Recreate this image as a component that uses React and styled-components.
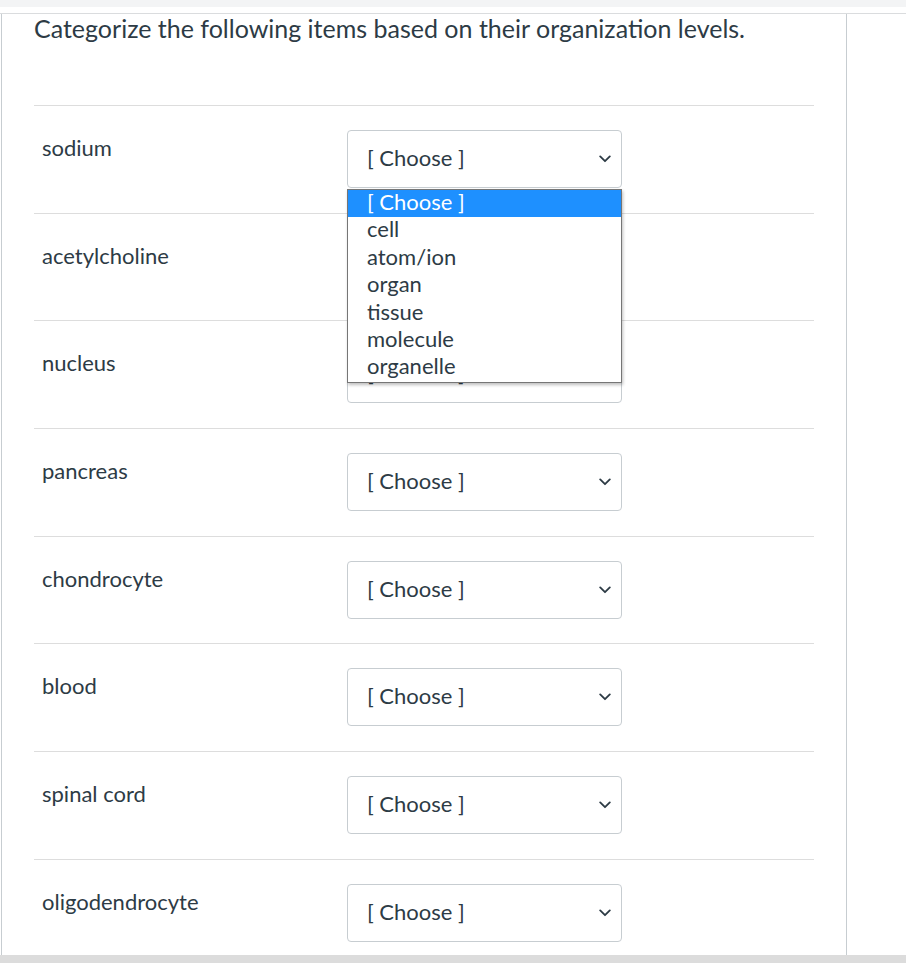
import React from 'react';
import styled, { createGlobalStyle } from 'styled-components';

const items = [
  'sodium',
  'acetylcholine',
  'nucleus',
  'pancreas',
  'chondrocyte',
  'blood',
  'spinal cord',
  'oligodendrocyte',
];

const options = ['[ Choose ]', 'cell', 'atom/ion', 'organ', 'tissue', 'molecule', 'organelle'];

const Chevron = () => (
  <svg width="12" height="8" viewBox="0 0 12 8" fill="none">
    <path d="M1.2 1.4 L6 6.2 L10.8 1.4" stroke="#2d3b45" strokeWidth="1.8" strokeLinecap="round" strokeLinejoin="round" />
  </svg>
);

const App = () => {
  return (
    <Page>
      <GlobalStyle />
      <TopBand />
      <Main>
        <QuestionBox>
          <Title>Categorize the following items based on their organization levels.</Title>
          <Rows>
            {items.map((item, i) => (
              <Row key={item}>
                <Label>{item}</Label>
                <SelectWrap>
                  <SelectBox>
                    <SelectText>[ Choose ]</SelectText>
                    <Chevron />
                  </SelectBox>
                  {i === 0 && (
                    <OptionList>
                      {options.map((opt, j) => (
                        <Option key={opt} $active={j === 0}>{opt}</Option>
                      ))}
                    </OptionList>
                  )}
                </SelectWrap>
              </Row>
            ))}
          </Rows>
        </QuestionBox>
      </Main>
      <BottomBand />
    </Page>
  );
};

export default App;

const GlobalStyle = createGlobalStyle`
  body {
    margin: 0;
    background: #fff;
    font-family: Lato, "Open Sans", sans-serif;
    color: #2d3b45;
  }
`;

const Page = styled.div`
  height: 963px;
  display: flex;
  flex-direction: column;
  overflow: hidden;
`;

const TopBand = styled.div`
  height: 7px;
  background: #f3f4f5;
  margin-bottom: 6px;
  flex-shrink: 0;
`;

const BottomBand = styled.div`
  height: 8px;
  background: #dcdcdc;
  flex-shrink: 0;
`;

const Main = styled.div`
  flex: 1;
  min-height: 0;
  border-top: 1px solid #dadcde;
  display: flex;
  overflow: hidden;
`;

const QuestionBox = styled.div`
  width: 812px;
  margin-left: 1px;
  border-left: 1px solid #c7cdd1;
  border-right: 1px solid #c7cdd1;
  padding-left: 32px;
  box-sizing: content-box;
  flex-shrink: 0;
`;

const Title = styled.div`
  font-size: 25px;
  line-height: 28px;
  padding-top: 0;
  height: 91px;
`;

const Rows = styled.div`
  width: 780px;
`;

const Row = styled.div`
  display: flex;
  border-top: 1px solid #dddddd;
  padding: 24px 0 24.7px;
`;

const Label = styled.div`
  width: 313px;
  padding-left: 8px;
  box-sizing: border-box;
  font-size: 22px;
  line-height: 26px;
  padding-top: 5px;
`;

const SelectWrap = styled.div`
  position: relative;
`;

const SelectBox = styled.div`
  width: 275px;
  height: 58px;
  box-sizing: border-box;
  border: 1px solid #c7cdd1;
  border-radius: 4px;
  background: #fff;
  display: flex;
  align-items: center;
  justify-content: space-between;
  padding: 0 10px 0 19px;
`;

const SelectText = styled.span`
  font-size: 22px;
  line-height: 26px;
  margin-bottom: 2px;
`;

const OptionList = styled.div`
  position: absolute;
  top: 59px;
  left: 0;
  width: 275px;
  box-sizing: border-box;
  border: 1px solid #767676;
  background: #fff;
  box-shadow: 1px 2px 3px rgba(0, 0, 0, 0.25);
  z-index: 5;
`;

const Option = styled.div`
  height: 27.4px;
  box-sizing: border-box;
  line-height: 23.4px;
  padding-bottom: 4px;
  font-size: 22px;
  padding-left: 19px;
  background: ${(p) => (p.$active ? '#1e90ff' : '#fff')};
  color: ${(p) => (p.$active ? '#fff' : '#2d3b45')};
`;
